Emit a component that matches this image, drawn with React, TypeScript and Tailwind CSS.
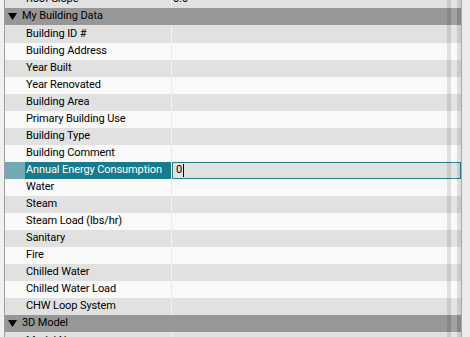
import React from "react"

const rows = [
  "Building ID #",
  "Building Address",
  "Year Built",
  "Year Renovated",
  "Building Area",
  "Primary Building Use",
  "Building Type",
  "Building Comment",
  "Annual Energy Consumption",
  "Water",
  "Steam",
  "Steam Load (lbs/hr)",
  "Sanitary",
  "Fire",
  "Chilled Water",
  "Chilled Water Load",
  "CHW Loop System",
]

const SELECTED = 8

function Caret() {
  return (
    <svg width="9" height="7" viewBox="0 0 9 7" className="shrink-0">
      <path d="M0 0 H9 L4.5 7 Z" fill="#000" />
    </svg>
  )
}

function Section({ title }: { title: string }) {
  return (
    <div className="flex h-[18px] items-center gap-[5px] border-b border-[#e4e4e4] bg-[#979797] pl-[3px]">
      <Caret />
      <span className="whitespace-nowrap">{title}</span>
    </div>
  )
}

function Row({ label, value, index }: { label: string; value?: string; index: number }) {
  const gray = index % 2 === 0
  const selected = index === SELECTED
  const bg = gray ? "bg-[#e1e1e1]" : "bg-[#f9f9f9]"
  return (
    <div className={`flex h-[17px] ${bg}`}>
      <div className={`w-[20px] shrink-0 ${selected ? "bg-[#71a9b4]" : ""}`} />
      <div
        className={`flex w-[146px] shrink-0 items-center overflow-hidden whitespace-nowrap pl-[1px] ${
          selected ? "bg-[#177b8d] text-white" : ""
        }`}
      >
        {label}
      </div>
      <div className={`w-px shrink-0 ${gray ? "bg-[#f4f4f4]" : "bg-[#e9e9e9]"}`} />
      {selected ? (
        <div className="flex flex-1 items-center border border-[#2a7e8e] bg-[#e1e1e1] pl-[3px]">
          <span>0</span>
          <span className="ml-[1px] h-[13px] w-px bg-black" />
        </div>
      ) : (
        <div className="flex flex-1 items-center whitespace-nowrap pl-[1px]">{value}</div>
      )}
    </div>
  )
}

export default function App() {
  return (
    <div
      className="relative flex h-[337px] w-[470px] overflow-hidden bg-[#ebebeb] text-[11px] tracking-[-0.1px] text-black"
      style={{ fontFamily: 'Roboto, "Liberation Sans", Arial, sans-serif' }}
    >
      <div className="w-[4px] shrink-0 bg-[#f0f0f0]" />
      <div className="w-px shrink-0 bg-[#a0a0a0]" />

      <div className="relative flex w-[456px] shrink-0 flex-col">
        <div className="-mt-[9px] flex flex-col">
          <Row label="Roof Slope" value="0.0" index={0} />
          <Section title="My Building Data" />
          {rows.map((label, i) => (
            <Row key={label} label={label} index={i} />
          ))}
          <Section title="3D Model" />
          <Row label="Model Name" index={0} />
        </div>

        {/* scroll indicator overlay */}
        <div className="pointer-events-none absolute inset-y-0 left-[442px] flex">
          <div className="w-[4px] bg-black/10" />
          <div className="w-[6px] bg-white/10" />
          <div className="w-[4px] bg-black/10" />
        </div>
      </div>

      <div className="w-px shrink-0 bg-[#a9a9a9]" />
      <div className="flex-1 bg-[#ebebeb]" />
    </div>
  )
}
